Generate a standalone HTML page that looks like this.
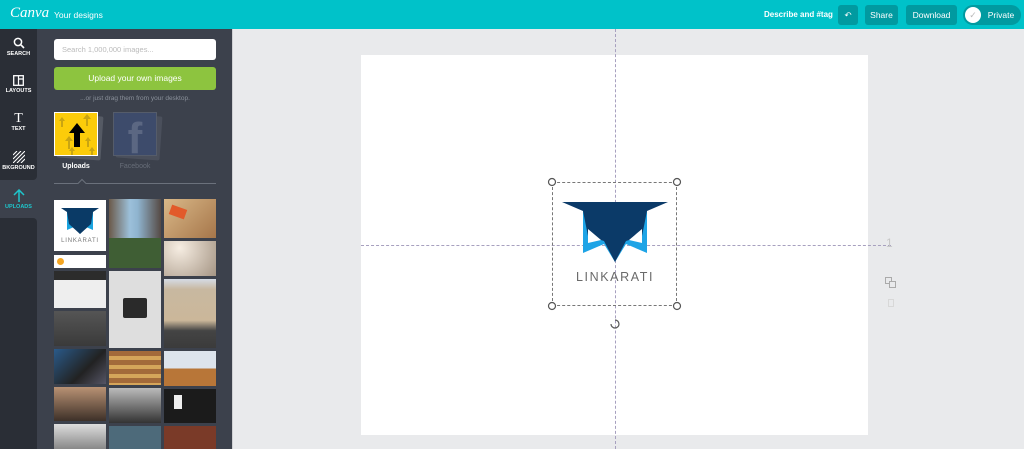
<!DOCTYPE html>
<html><head><meta charset="utf-8"><style>
*{margin:0;padding:0;box-sizing:border-box}
html,body{width:1024px;height:449px;overflow:hidden}
body{font-family:"Liberation Sans",sans-serif;background:#e9eaec;position:relative}
.hdr{position:absolute;left:0;top:0;width:1024px;height:29px;background:#00c2c9}
.abs{position:absolute}
.nav{position:absolute;left:0;top:29px;width:37px;height:420px;background:#3c414c}
.navd{position:absolute;left:0;width:37px;background:#2a2e36}
.ni{position:absolute;left:0;width:37px;text-align:center;color:#fff;font-size:5.5px;font-weight:bold}
.panel{position:absolute;left:37px;top:29px;width:195px;height:420px;background:#3c414c;overflow:hidden}
.btn{position:absolute;top:5px;height:20px;background:#019aa0;border-radius:3px;color:#fff;font-size:8.5px;text-align:center;line-height:20px}
.t{position:absolute}
</style></head><body>
<div class="hdr">
  <div class="t" style="left:10px;top:5px;color:#fff;font-family:'Liberation Serif',serif;font-style:italic;font-size:15px;">Canva</div>
  <div class="t" style="left:54px;top:10px;color:#fff;font-size:8.5px;">Your designs</div>
  <div class="t" style="left:764px;top:10px;color:#fff;font-size:8px;font-weight:bold;">Describe and #tag</div>
  <div class="btn" style="left:838px;width:20px;">&#8630;</div>
  <div class="btn" style="left:865px;width:33px;">Share</div>
  <div class="btn" style="left:906px;width:51px;">Download</div>
  <div class="btn" style="left:963px;width:58px;border-radius:10px;padding-left:18px;">Private</div>
  <div class="abs" style="left:965px;top:7px;width:16px;height:16px;border-radius:50%;background:#fff;color:#bbb;font-size:9px;text-align:center;line-height:16px">&#10003;</div>
</div>
<div class="nav">
  <div class="navd" style="top:0;height:151px;border-bottom-right-radius:4px"></div>
  <div class="navd" style="top:189px;height:231px;border-top-right-radius:4px"></div>
  <div class="ni" style="top:8px"><svg width="12" height="12" viewBox="0 0 12 12"><circle cx="5" cy="5" r="3.6" fill="none" stroke="#fff" stroke-width="1.5"/><path d="M7.6 7.6L11 11" stroke="#fff" stroke-width="1.6"/></svg><div>SEARCH</div></div>
  <div class="ni" style="top:46px"><svg width="11" height="11" viewBox="0 0 11 11"><rect x=".7" y=".7" width="9.6" height="9.6" fill="none" stroke="#fff" stroke-width="1.3"/><path d="M5.5 1v9M5.5 4h5" stroke="#fff" stroke-width="1.2"/></svg><div>LAYOUTS</div></div>
  <div class="ni" style="top:83px"><div style="font-family:'Liberation Serif',serif;font-size:14px;font-weight:normal;line-height:14px">T</div><div>TEXT</div></div>
  <div class="ni" style="top:122px"><svg width="12" height="12" viewBox="0 0 12 12"><path d="M0 4L4 0M0 8L8 0M0 12L12 0M4 12L12 4M8 12L12 8" stroke="#fff" stroke-width="1.1"/></svg><div>BKGROUND</div></div>
  <div class="ni" style="top:160px;color:#1ec6cc"><svg width="12" height="13" viewBox="0 0 12 13"><path d="M6 13V1M1 6L6 1L11 6" stroke="#1ec6cc" stroke-width="1.5" fill="none"/></svg><div>UPLOADS</div></div>
</div>
<div class="panel">
  <div class="abs" style="left:17px;top:10px;width:162px;height:21px;background:#fff;border-radius:3px;color:#bbb;font-size:7.5px;line-height:21px;padding-left:8px">Search 1,000,000 images...</div>
  <div class="abs" style="left:17px;top:38px;width:162px;height:23px;background:#8dc43f;border-radius:3px;color:#fff;font-size:8.5px;line-height:23px;text-align:center">Upload your own images</div>
  <div class="abs" style="left:17px;top:66px;width:162px;color:#8a909a;font-size:6.5px;text-align:center">...or just drag them from your desktop.</div>
  <div class="abs" style="left:21px;top:86px;width:44px;height:44px;background:#555a64;border-radius:2px;transform:rotate(4deg)"></div>
  <div class="abs" style="left:17px;top:83px;width:44px;height:44px;background:#fccc0a;border:1px solid #fff;overflow:hidden">
    <svg width="44" height="44" viewBox="0 0 44 44"><g fill="#c9a512"><path d="M4 8l3-4 3 4h-2v6h-2v-6z"/><path d="M28 6l4-5 4 5h-3v7h-2v-7z"/><path d="M10 28l4-5 4 5h-3v8h-2v-8z"/><path d="M30 28l3-4 3 4h-2v6h-2v-6z"/><path d="M14 38l3-4 3 4h-2v6h-2v-6z"/><path d="M34 38l3-4 3 4h-2v6h-2v-6z"/></g><path d="M22 10l8 10h-5v14h-6V20h-5z" fill="#000"/></svg>
  </div>
  <div class="abs" style="left:80px;top:86px;width:44px;height:44px;background:#4a4f5b;border-radius:2px;transform:rotate(4deg)"></div>
  <div class="abs" style="left:76px;top:83px;width:44px;height:44px;background:#3d4b6b;border:1px solid #555c6a;overflow:hidden;color:#5b6782;font-size:44px;font-weight:bold;text-align:center;line-height:52px">f</div>
  <div class="abs" style="left:17px;top:134px;width:44px;text-align:center;color:#fff;font-size:7px;font-weight:bold">Uploads</div>
  <div class="abs" style="left:76px;top:134px;width:44px;text-align:center;color:#676d78;font-size:7px">Facebook</div>
  <div class="abs" style="left:17px;top:154px;width:162px;height:1px;background:#6b717c"></div>
  <div class="abs" style="left:42px;top:151px;width:6px;height:6px;background:#3c414c;border-left:1px solid #6b717c;border-top:1px solid #6b717c;transform:rotate(45deg)"></div>
  <div class="abs" style="left:17px;top:171px;width:52px;height:51px;background:#fff">
    <svg width="52" height="51" viewBox="0 0 52 51"><path d="M13 12L39 12L39 30L32 27L26 34L20 27L13 30Z" fill="#1aa4e0"/><path d="M7 8L45 8L39 12L37 24L26 34L15 24L13 12Z" fill="#0a3a66"/><text x="26" y="42" font-size="6" fill="#777" text-anchor="middle" letter-spacing="0.8">LINKARATI</text></svg>
  </div>
  <div class="abs" style="left:17px;top:226px;width:52px;height:13px;background:#fff"><div style="margin:3px 0 0 3px;width:7px;height:7px;border-radius:50%;background:#f5a623"></div></div>
  <div class="abs" style="left:17px;top:242px;width:52px;height:37px;background:linear-gradient(#2c2c2c 25%,#eee 25%)"></div>
  <div class="abs" style="left:17px;top:282px;width:52px;height:35px;background:linear-gradient(#555,#3a3a3a)"></div>
  <div class="abs" style="left:17px;top:320px;width:52px;height:35px;background:linear-gradient(135deg,#2a5a8a,#222 60%,#556)"></div>
  <div class="abs" style="left:17px;top:358px;width:52px;height:34px;background:linear-gradient(#b99274,#3d3028)"></div>
  <div class="abs" style="left:17px;top:395px;width:52px;height:30px;background:linear-gradient(#ddd,#777)"></div>
  <div class="abs" style="left:72px;top:170px;width:52px;height:69px;background:linear-gradient(90deg,#6b5a4a,#9cc0da 40%,#8fb4cf 55%,#564a44);"><div style="position:absolute;bottom:0;width:52px;height:30px;background:#3f5e34"></div></div>
  <div class="abs" style="left:72px;top:242px;width:52px;height:77px;background:#dedede"><div style="margin:27px 0 0 14px;width:24px;height:20px;background:#2a2a2a;border-radius:2px"></div></div>
  <div class="abs" style="left:72px;top:322px;width:52px;height:34px;background:repeating-linear-gradient(#a36a3a 0 5px,#d5a55a 5px 9px)"></div>
  <div class="abs" style="left:72px;top:359px;width:52px;height:35px;background:linear-gradient(#bbb,#333)"></div>
  <div class="abs" style="left:72px;top:397px;width:52px;height:28px;background:#4d6a7a"></div>
  <div class="abs" style="left:127px;top:170px;width:52px;height:39px;background:linear-gradient(135deg,#d9b888,#a6764a)"><div style="margin:8px 0 0 6px;width:16px;height:10px;background:#e25a2a;transform:rotate(20deg)"></div></div>
  <div class="abs" style="left:127px;top:212px;width:52px;height:35px;background:radial-gradient(circle at 30% 20%,#f6ede2,#a59584)"></div>
  <div class="abs" style="left:127px;top:250px;width:52px;height:69px;background:linear-gradient(#d5dbe5 0,#c8b8a0 15%,#cbb79a 60%,#444 75%,#3b3b3b)"></div>
  <div class="abs" style="left:127px;top:322px;width:52px;height:35px;background:linear-gradient(#dde4ec 50%,#b87638 50%)"></div>
  <div class="abs" style="left:127px;top:360px;width:52px;height:34px;background:#1b1b1b"><div style="margin:6px 0 0 10px;width:8px;height:14px;background:#eee"></div></div>
  <div class="abs" style="left:127px;top:397px;width:52px;height:28px;background:#7a3a28"></div>
</div>
<div class="abs" style="left:232px;top:29px;width:1px;height:420px;background:#cfd0d3"></div>
<div class="abs" style="left:361px;top:55px;width:507px;height:380px;background:#fff"></div>
<div class="abs" style="left:615px;top:29px;width:0;height:420px;border-left:1px dashed #a7a0bf"></div>
<div class="abs" style="left:361px;top:245px;width:530px;height:0;border-top:1px dashed #a7a0bf"></div>
<div class="abs" style="left:552px;top:182px;width:125px;height:124px;border:1px dashed #777"></div>
<svg class="abs" style="left:546px;top:176px" width="140" height="160" viewBox="0 0 140 160">
  <g fill="#fff" stroke="#555" stroke-width="1.2"><circle cx="6" cy="6" r="3.5"/><circle cx="131" cy="6" r="3.5"/><circle cx="6" cy="130" r="3.5"/><circle cx="131" cy="130" r="3.5"/></g>
  <path d="M65 148a4 4 0 1 0 4-4" fill="none" stroke="#555" stroke-width="1.2"/>
  <path d="M37 34L101 34L101 77L80 68L69 86L58 68L37 77Z" fill="#1ea4e6"/>
  <path d="M16 26L122 26L101 35L96 60L80 65L69 86L58 65L42 60L37 35Z" fill="#0b3a68"/>
  <path d="M42 53L42 67L55 64Z M96 53L96 67L83 64Z" fill="#fff"/>
  <text x="69" y="105" font-family="Liberation Sans" font-size="12.5" fill="#6a6a6a" text-anchor="middle" letter-spacing="1.6">LINKARATI</text>
</svg>
<div class="abs" style="left:886px;top:236px;color:#c7c7c7;font-size:12px">1</div>
<svg class="abs" style="left:885px;top:277px" width="12" height="12"><rect x="0.5" y="0.5" width="6" height="6" fill="none" stroke="#aaa"/><rect x="4.5" y="4.5" width="6" height="6" fill="#e9eaec" stroke="#aaa"/></svg>
<div class="abs" style="left:888px;top:299px;width:6px;height:8px;border:1px solid #d8d8d8"></div>
</body></html>
